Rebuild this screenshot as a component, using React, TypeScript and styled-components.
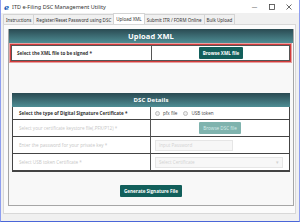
import styled, { createGlobalStyle } from 'styled-components';

const GlobalStyle = createGlobalStyle`
  html, body {
    margin: 0;
    padding: 0;
    background: #f0f0f0;
  }
  * {
    box-sizing: border-box;
  }
`;

const Window = styled.div`
  width: 300px;
  height: 222px;
  display: flex;
  flex-direction: column;
  background: #f0f0f0;
  border-left: 1px solid #8e9ef0;
  border-right: 1px solid #8e9ef0;
  border-bottom: 1px solid #4a66d8;
  font-family: 'Open Sans', sans-serif;
  overflow: hidden;
`;

const TitleBar = styled.div`
  height: 13px;
  flex: none;
  display: flex;
  align-items: center;
  background: #ffffff;
  padding: 0 0 0 3px;
  font-family: 'Noto Sans', sans-serif;
  font-size: 5.5px;
  color: #333;
`;

const AppLogo = styled.span`
  font-family: 'DejaVu Serif', serif;
  font-style: italic;
  font-weight: bold;
  font-size: 8px;
  color: #1c5fb8;
  margin-right: 3px;
  line-height: 1;
`;

const TitleText = styled.span`
  flex: 1;
`;

const WinControl = styled.span<{ $last?: boolean }>`
  width: 17px;
  display: flex;
  justify-content: center;
  align-items: center;
  color: #444;
  margin-right: ${(p) => (p.$last ? '2px' : '0')};
`;

const TabStrip = styled.div`
  height: 11px;
  flex: none;
  display: flex;
  align-items: flex-end;
  padding-left: 2px;
  background: #f0f0f0;
`;

const Tab = styled.div<{ $active?: boolean }>`
  height: ${(p) => (p.$active ? '11px' : '10px')};
  padding: 0 2px;
  display: flex;
  align-items: center;
  font-family: 'Noto Sans', sans-serif;
  font-size: 4.5px;
  color: #333;
  background: ${(p) => (p.$active ? '#ffffff' : '#f0f0f0')};
  border: 1px solid #d4d4d4;
  border-bottom: none;
  margin-right: -1px;
  white-space: nowrap;
`;

const TabPage = styled.div`
  flex: 1;
  margin: 0 3px 7px 2px;
  background: #fbfbfb;
  border: 1px solid #d8d8d8;
  padding: 4px 1px 7px 4px;
  display: flex;
`;

const Panel = styled.div`
  flex: 1;
  display: flex;
  flex-direction: column;
  border: 1px solid #a6a6a6;
  border-top: none;
  background: #f8f8f8;
`;

const HeaderBar = styled.div<{ $inset?: boolean }>`
  height: 14px;
  margin: ${(p) => (p.$inset ? '0 3px' : '0')};
  display: flex;
  align-items: center;
  justify-content: center;
  background: linear-gradient(#2a4a52, #4e8d94);
  color: #ffffff;
  font-weight: bold;
  font-size: ${(p) => (p.$inset ? '6px' : '7.5px')};
  letter-spacing: 0.1px;
`;

const XmlRow = styled.div`
  margin: 1px 2px 0 1px;
  height: 18px;
  display: grid;
  grid-template-columns: 141px 1fr;
  border: 1px solid #d23b3b;
  outline: 1px solid #e8a0a0;
  box-shadow: inset 0 0 0 1px #555;
  background: #ffffff;
`;

const LabelCell = styled.div<{ $muted?: boolean }>`
  display: flex;
  align-items: center;
  padding-left: 6px;
  font-size: 4.6px;
  font-weight: ${(p) => (p.$muted ? 'normal' : 'bold')};
  color: ${(p) => (p.$muted ? '#c6c6c6' : '#333')};
  border-right: 1px solid #555;
`;

const ValueCell = styled.div<{ $center?: boolean }>`
  display: flex;
  align-items: center;
  justify-content: ${(p) => (p.$center ? 'center' : 'flex-start')};
  padding-left: ${(p) => (p.$center ? '0' : '4px')};
  gap: 3px;
`;

const TealButton = styled.button<{ $disabled?: boolean }>`
  height: 12px;
  padding: 0 4px;
  border: none;
  border-radius: 1px;
  background: ${(p) => (p.$disabled ? '#7fb3ae' : '#125f5b')};
  color: ${(p) => (p.$disabled ? '#d8ecea' : '#ffffff')};
  font-family: 'Open Sans', sans-serif;
  font-weight: ${(p) => (p.$disabled ? 'normal' : 'bold')};
  font-size: 4.6px;
  white-space: nowrap;
`;

const Spacer = styled.div`
  height: 31px;
`;

const DscTable = styled.div`
  margin: 0 3px;
  display: grid;
  grid-template-columns: 138px 1fr;
  border: 1px solid #444;
  border-top: none;
  background: #ffffff;
`;

const TableRow = styled.div<{ $h: number }>`
  display: contents;

  & > div {
    height: ${(p) => p.$h}px;
    border-bottom: 1px solid #444;
  }
`;

const Radio = styled.span`
  width: 5px;
  height: 5px;
  border-radius: 50%;
  border: 1px solid #bdbdbd;
  background: #ececec;
`;

const RadioLabel = styled.span`
  font-size: 4.6px;
  color: #444;
  margin-right: 3px;
`;

const FakeInput = styled.div<{ $w: number }>`
  width: ${(p) => p.$w}px;
  height: 11px;
  border: 1px solid #e6e6e6;
  background: #f7f7f7;
  display: flex;
  align-items: center;
  justify-content: space-between;
  padding: 0 3px;
  font-size: 4.6px;
  color: #d2d2d2;
`;

const Footer = styled.div`
  flex: 1;
  display: flex;
  justify-content: center;
  align-items: center;
  padding-top: 4px;
`;

export default function App() {
  return (
    <>
      <GlobalStyle />
      <Window>
        <TitleBar>
          <AppLogo>e</AppLogo>
          <TitleText>ITD e-Filing DSC Management Utility</TitleText>
          <WinControl>&#8212;</WinControl>
          <WinControl>
            <svg width="6" height="6" viewBox="0 0 6 6">
              <rect x="0.5" y="0.5" width="5" height="5" fill="none" stroke="#444" strokeWidth="0.8" />
            </svg>
          </WinControl>
          <WinControl $last>
            <svg width="6" height="6" viewBox="0 0 6 6">
              <path d="M0.5 0.5 L5.5 5.5 M5.5 0.5 L0.5 5.5" stroke="#444" strokeWidth="0.8" />
            </svg>
          </WinControl>
        </TitleBar>
        <TabStrip>
          <Tab>Instructions</Tab>
          <Tab>Register/Reset Password using DSC</Tab>
          <Tab $active>Upload XML</Tab>
          <Tab>Submit ITR / FORM Online</Tab>
          <Tab>Bulk Upload</Tab>
        </TabStrip>
        <TabPage>
          <Panel>
            <HeaderBar>Upload XML</HeaderBar>
            <XmlRow>
              <LabelCell>Select the XML file to be signed *</LabelCell>
              <ValueCell $center>
                <TealButton>Browse XML file</TealButton>
              </ValueCell>
            </XmlRow>
            <Spacer />
            <HeaderBar $inset>DSC Details</HeaderBar>
            <DscTable>
              <TableRow $h={13}>
                <LabelCell>Select the type of Digital Signature Certificate *</LabelCell>
                <ValueCell>
                  <Radio />
                  <RadioLabel>pfx file</RadioLabel>
                  <Radio />
                  <RadioLabel>USB token</RadioLabel>
                </ValueCell>
              </TableRow>
              <TableRow $h={17}>
                <LabelCell $muted>Select your certificate keystore file(.PFX/P12) *</LabelCell>
                <ValueCell $center>
                  <TealButton $disabled>Browse DSC file</TealButton>
                </ValueCell>
              </TableRow>
              <TableRow $h={17}>
                <LabelCell $muted>Enter the password for your private key *</LabelCell>
                <ValueCell>
                  <FakeInput $w={78}>Input Password</FakeInput>
                </ValueCell>
              </TableRow>
              <TableRow $h={17}>
                <LabelCell $muted>Select USB token Certificate *</LabelCell>
                <ValueCell>
                  <FakeInput $w={128}>
                    <span>Select Certificate</span>
                    <span>&#9662;</span>
                  </FakeInput>
                </ValueCell>
              </TableRow>
            </DscTable>
            <Footer>
              <TealButton>Generate Signature File</TealButton>
            </Footer>
          </Panel>
        </TabPage>
      </Window>
    </>
  );
}
